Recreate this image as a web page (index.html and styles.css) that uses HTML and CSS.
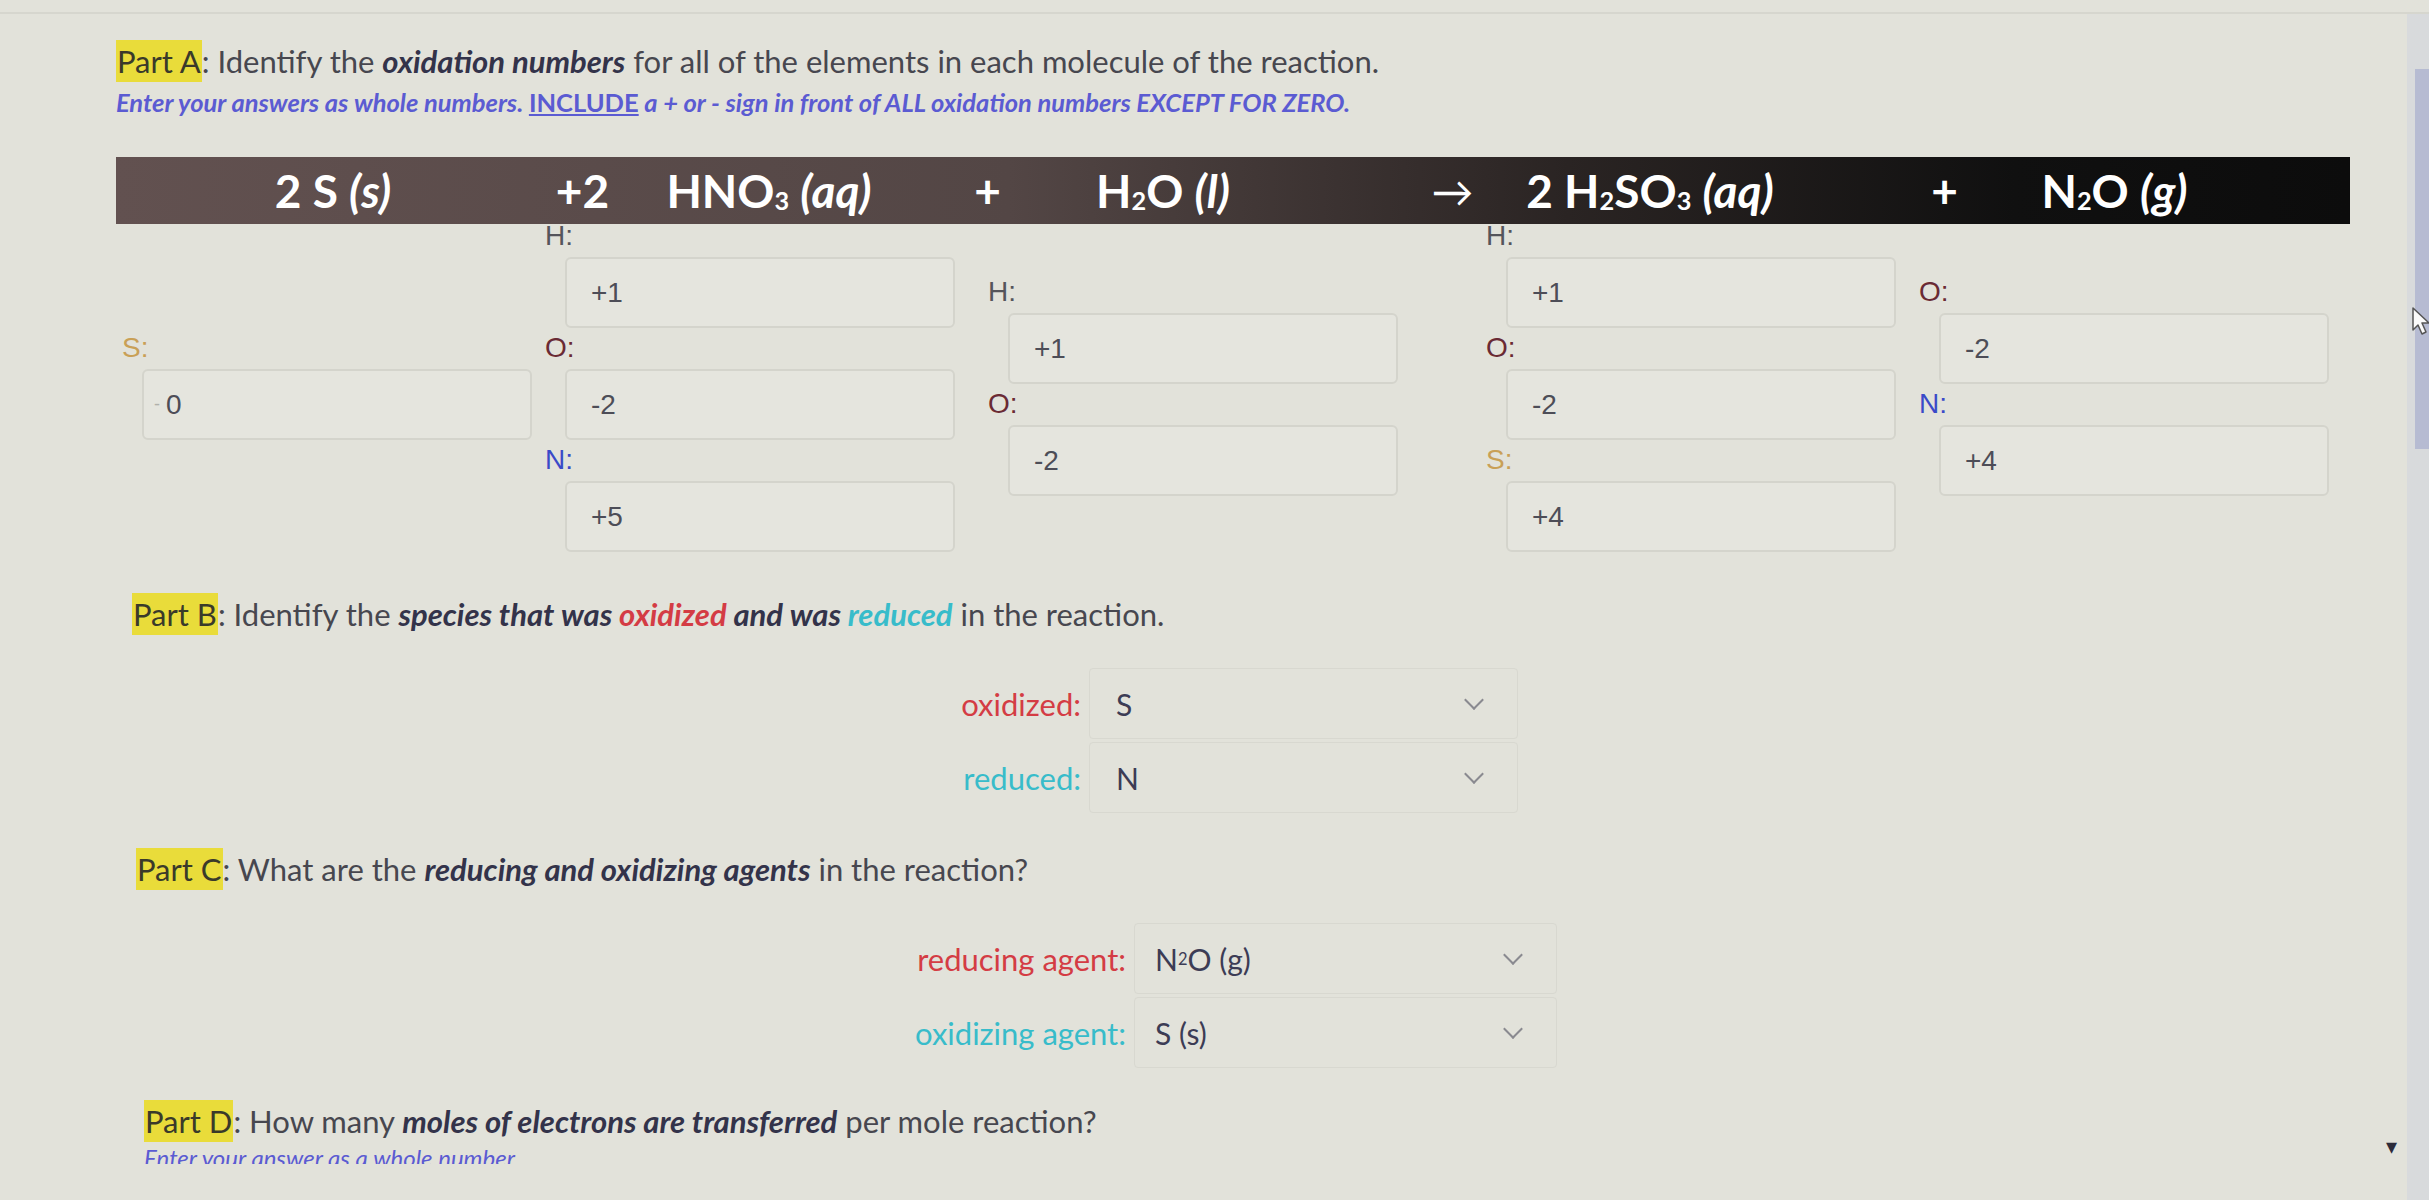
FILE: index.html
```html
<!DOCTYPE html>
<html lang="en">
<head>
    <meta charset="UTF-8">
    <meta name="viewport" content="width=device-width, initial-scale=1.0">
    <title>Oxidation numbers</title>
    <link rel="stylesheet" href="styles.css">
</head>
<body>
    <div class="frame">
        <main class="sheet">
            <p class="prompt"><span class="part">Part A</span>: Identify the <em>oxidation numbers</em> for all of the elements in each molecule of the reaction.</p>
            <p class="hint">Enter your answers as whole numbers. <u>INCLUDE</u> a + or - sign in front of ALL oxidation numbers EXCEPT FOR ZERO.</p>

            <div class="equation">
                <span class="term t1"><span>2 S <i>(s)</i></span></span>
                <span class="term t2"><span>+2</span></span>
                <span class="term t3"><span>HNO<sub>3</sub> <i>(aq)</i></span></span>
                <span class="term t4"><span>+</span></span>
                <span class="term t5"><span>H<sub>2</sub>O <i>(l)</i></span></span>
                <span class="term t6 arrow"><span>&rarr;</span></span>
                <span class="term t7"><span>2 H<sub>2</sub>SO<sub>3</sub> <i>(aq)</i></span></span>
                <span class="term t8"><span>+</span></span>
                <span class="term t9"><span>N<sub>2</sub>O <i>(g)</i></span></span>
            </div>

            <!-- one column per molecule, each is vertically centred -->
            <div class="species">
                <div class="col">
                    <div class="el"><div class="el-label s">S:</div><div class="el-box"><span class="caret">-</span>0</div></div>
                </div>
                <div class="col">
                    <div class="el"><div class="el-label h">H:</div><div class="el-box">+1</div></div>
                    <div class="el"><div class="el-label o">O:</div><div class="el-box">-2</div></div>
                    <div class="el"><div class="el-label n">N:</div><div class="el-box">+5</div></div>
                </div>
                <div class="col">
                    <div class="el"><div class="el-label h">H:</div><div class="el-box">+1</div></div>
                    <div class="el"><div class="el-label o">O:</div><div class="el-box">-2</div></div>
                </div>
                <div class="col">
                    <div class="el"><div class="el-label h">H:</div><div class="el-box">+1</div></div>
                    <div class="el"><div class="el-label o">O:</div><div class="el-box">-2</div></div>
                    <div class="el"><div class="el-label s">S:</div><div class="el-box">+4</div></div>
                </div>
                <div class="col">
                    <div class="el"><div class="el-label o">O:</div><div class="el-box">-2</div></div>
                    <div class="el"><div class="el-label n">N:</div><div class="el-box">+4</div></div>
                </div>
            </div>

            <section class="question q-b">
                <p class="prompt"><span class="part">Part B</span>: Identify the <em>species that was <span class="red">oxidized</span> and was <span class="cyan">reduced</span></em> in the reaction.</p>
                <div class="choices">
                    <div class="choice"><span class="choice-label red">oxidized:</span><div class="select">S<span class="chev"></span></div></div>
                    <div class="choice"><span class="choice-label cyan">reduced:</span><div class="select">N<span class="chev"></span></div></div>
                </div>
            </section>

            <section class="question q-c">
                <p class="prompt"><span class="part">Part C</span>: What are the <em>reducing and oxidizing agents</em> in the reaction?</p>
                <div class="choices">
                    <div class="choice"><span class="choice-label red">reducing agent:</span><div class="select">N<sub>2</sub>O (g)<span class="chev"></span></div></div>
                    <div class="choice"><span class="choice-label cyan">oxidizing agent:</span><div class="select">S (s)<span class="chev"></span></div></div>
                </div>
            </section>

            <section class="question q-d">
                <p class="prompt"><span class="part">Part D</span>: How many <em>moles of electrons are transferred</em> per mole reaction?</p>
                <p class="hint small">Enter your answer as a whole number.</p>
            </section>
        </main>
    </div>

    <div class="scroll-track"><div class="scroll-thumb"></div></div>
    <svg class="pointer" width="22" height="30" viewBox="0 0 22 30"><path d="M2 2 L2 24 L7 19 L11 28 L15 26 L11 17 L18 17 Z" fill="#fafafa" stroke="#555" stroke-width="1.5" stroke-linejoin="round"/></svg>
    <span class="scroll-down">&#9662;</span>
</body>
</html>
```

FILE: styles.css
```css
body {
    margin: 0;
    background: #e2e2da;
    font-family: Lato, "Open Sans", sans-serif;
    color: #45454d;
    height: 1200px;
    overflow: hidden;
    position: relative;
}

/* the page is scrolled, so the last line is cut */
.frame {
    margin-top: 12px;
    border-top: 2px solid #d6d6ce;
    height: 1150px;
    overflow: hidden;
}

.sheet {
    width: 2234px;
    padding: 28px 0 0 116px;
}

p {
    margin: 0;
}

.prompt {
    font-size: 31px;
    line-height: 38px;
    color: #47474f;
}
.prompt em {
    font-weight: 700;
    color: #33334a;
}
.part {
    background: #e9dc3a;
    color: #3a3a2a;
    padding: 2px 1px;
}

.hint {
    margin-top: 6px;
    font-size: 25.5px;
    line-height: 32px;
    font-weight: 700;
    font-style: italic;
    color: #5b5bd2;
}
.hint u {
    font-style: normal;
}

.red { color: #d43c44; }
.cyan { color: #38bcca; }

/* equation bar */
.equation {
    margin-top: 39px;
    height: 67px;
    display: flex;
    align-items: center;
    background: linear-gradient(to right, #625150 0%, #534645 40%, #2a2423 65%, #101010 85%, #0c0c0c 100%);
    color: #fff;
    font-size: 46px;
    font-weight: 700;
}
.term {
    display: flex;
    justify-content: center;
    flex-shrink: 0;
    white-space: nowrap;
}
.term sub {
    font-size: 0.55em;
    vertical-align: -0.08em;
}
.arrow {
    font-size: 42px;
    font-weight: 400;
}
.t1 { width: 120px; margin-left: 157px; }
.t2 { width: 65px; margin-left: 157px; }
.t3 { width: 206px; margin-left: 51px; }
.t4 { width: 23px; margin-left: 104px; }
.t5 { width: 136px; margin-left: 96px; }
.t6 { width: 39px; margin-left: 202px; }
.t7 { width: 248px; margin-left: 54px; }
.t8 { width: 23px; margin-left: 159px; }
.t9 { width: 145px; margin-left: 86px; }

/* oxidation number inputs */
.species {
    display: grid;
    grid-template-columns: 423px 443px 498px 433px 1fr;
    align-items: center;
    margin: -2px 0 0 6px;
    font-family: "Liberation Sans", Arial, sans-serif;
}
.col {
    display: flex;
    flex-direction: column;
    gap: 6px;
}
.el-label {
    font-size: 28px;
    line-height: 28px;
}
.el-label.s { color: #c9a056; }
.el-label.o { color: #6a2a34; }
.el-label.h { color: #55555b; }
.el-label.n { color: #3a4ac8; }
.el-box {
    margin: 7px 0 0 20px;
    width: 390px;
    height: 71px;
    box-sizing: border-box;
    border: 2px solid #d4d4cc;
    border-radius: 6px;
    background: #e5e5de;
    display: flex;
    align-items: center;
    padding-left: 24px;
    font-size: 28px;
    color: #4d4d57;
}
.caret {
    color: #b0b0aa;
    margin: 0 6px 0 -14px;
    font-size: 18px;
}

/* parts B - D */
.q-b { margin: 43px 0 0 16px; }
.q-c { margin: 37px 0 0 20px; }
.q-d { margin: 34px 0 0 28px; }

.choices {
    margin-top: 35px;
    display: flex;
    flex-direction: column;
    gap: 3px;
}
.choice {
    display: flex;
    align-items: center;
}
.choice-label {
    width: 949px;
    padding-right: 8px;
    text-align: right;
    font-size: 31px;
    flex-shrink: 0;
}
.q-c .choice-label {
    width: 990px;
}
.select {
    position: relative;
    width: 429px;
    height: 71px;
    box-sizing: border-box;
    border: 1px solid #d8d8d0;
    border-radius: 4px;
    display: flex;
    align-items: center;
    padding-left: 26px;
    font-size: 30px;
    color: #3c3c55;
}
.q-c .select {
    width: 423px;
    padding-left: 20px;
}
.select sub {
    font-size: 0.55em;
}
.chev {
    position: absolute;
    right: 36px;
    top: 24px;
    width: 12px;
    height: 12px;
    border-right: 2px solid #8a8a90;
    border-bottom: 2px solid #8a8a90;
    transform: rotate(45deg);
}

.hint.small {
    margin-top: 2px;
    font-size: 24px;
    font-weight: 400;
}

/* window chrome */
.scroll-track {
    position: absolute;
    right: 0;
    top: 14px;
    width: 22px;
    height: 1186px;
    background: #d8dadc;
}
.scroll-thumb {
    margin: 55px 0 0 8px;
    height: 380px;
    background: #b6bbd2;
}
.pointer {
    position: absolute;
    left: 2411px;
    top: 306px;
}
.scroll-down {
    position: absolute;
    left: 2386px;
    top: 1132px;
    font-size: 22px;
    color: #2c2c3a;
}
```
